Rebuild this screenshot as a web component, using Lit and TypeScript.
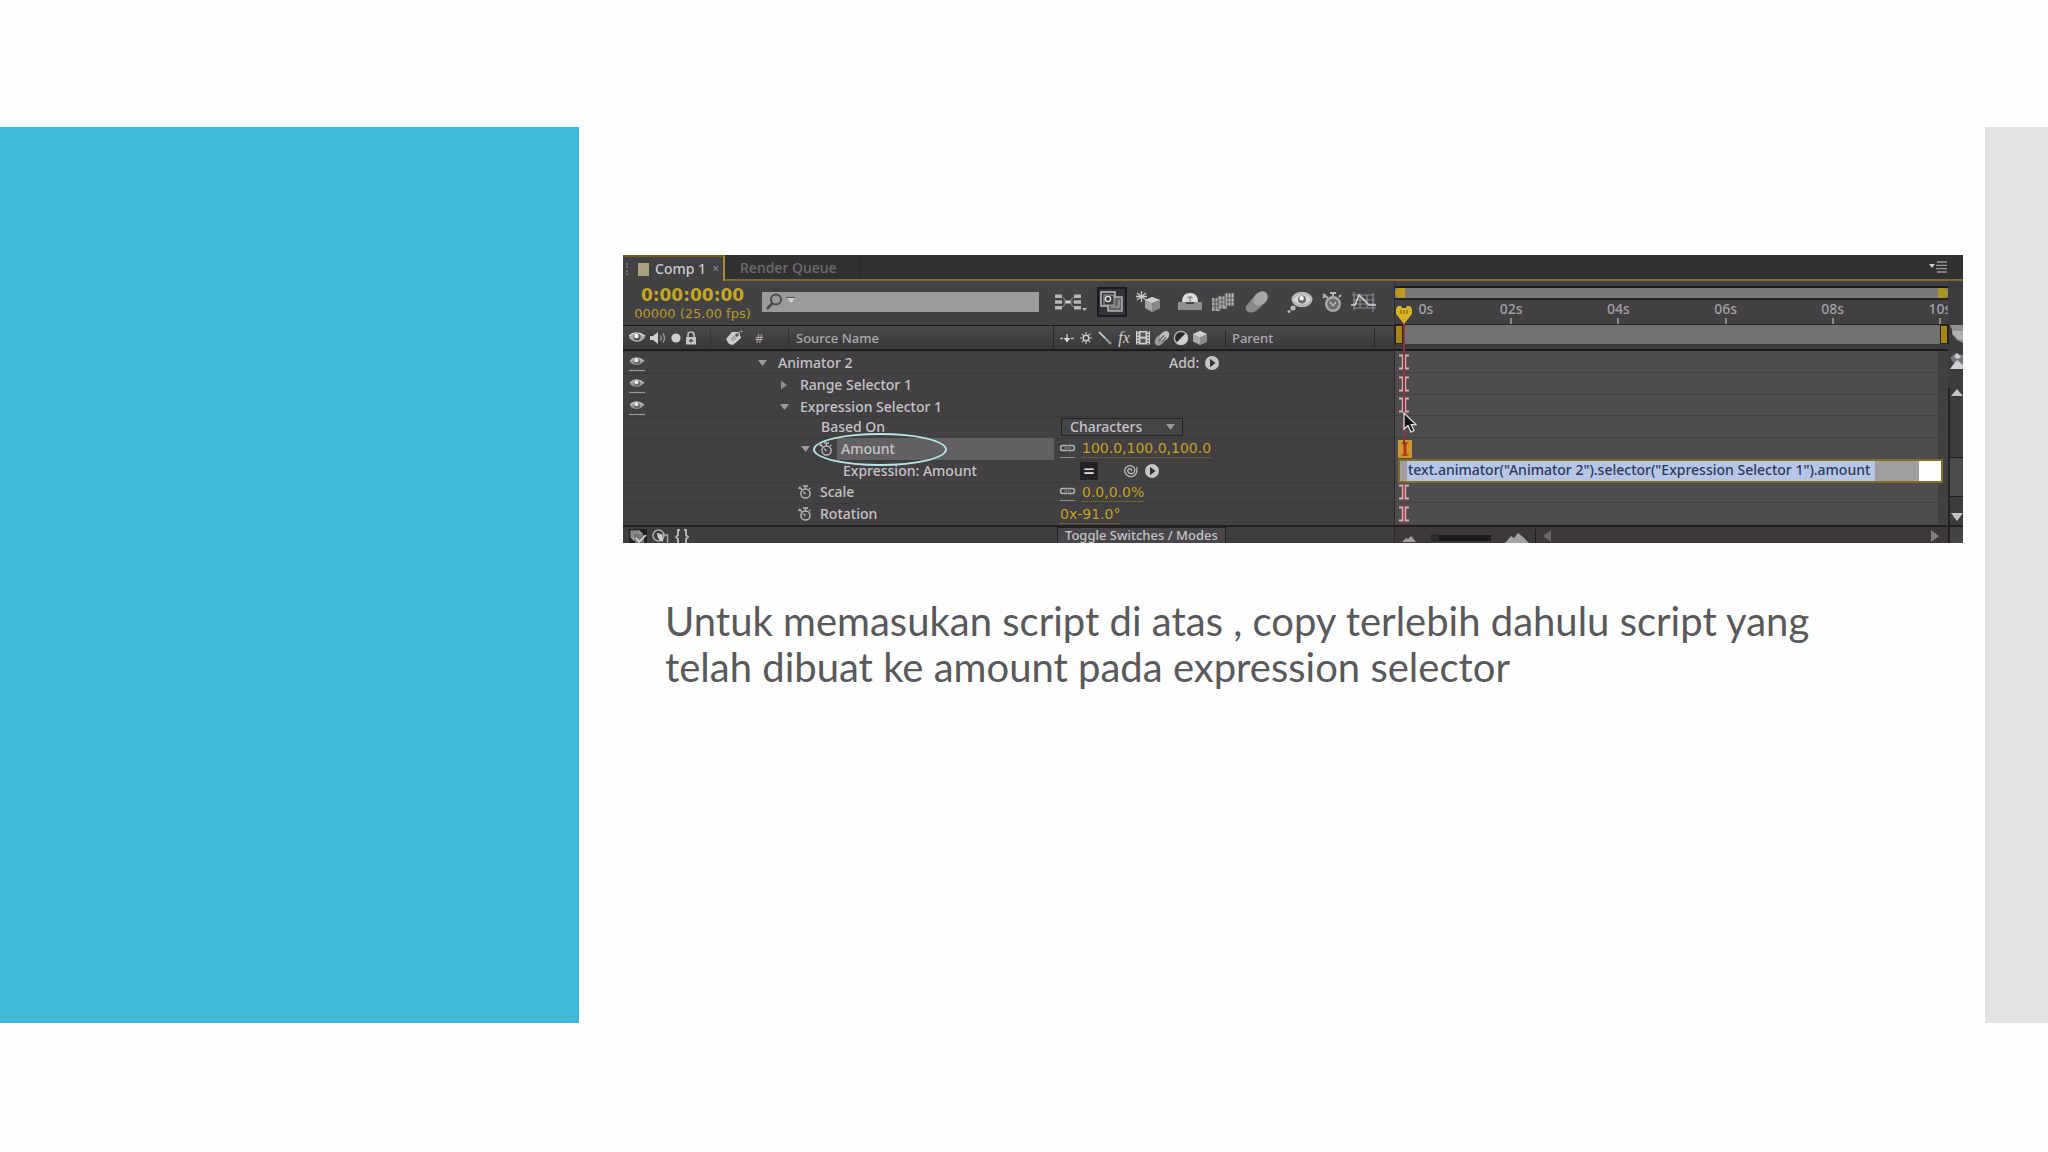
import { LitElement, html, css, svg, nothing, TemplateResult, SVGTemplateResult } from "lit";
import { customElement, property } from "lit/decorators.js";

type Shape = { w: number; h: number; body: SVGTemplateResult };

const shapes: Record<string, Shape> = {
  eye: { w: 18, h: 16, body: svg`<path d="M1 7Q8 -1 17 6L16 9Q9 15 2 9Z" fill="#a9a8aa"/><path d="M1 6Q8 0 17 6" fill="none" stroke="#d5d5d5" stroke-width="1.5"/><circle cx="9" cy="7" r="3.6" fill="#5a585b"/><circle cx="8.4" cy="6" r="2.2" fill="#fff"/>` },
  eyeRow: { w: 18, h: 18, body: svg`<path d="M2 8Q8 0 16 7Q10 14 3 9Z" fill="#9a999b"/><path d="M2 7Q8 1 16 7" fill="none" stroke="#bbb" stroke-width="1.3"/><circle cx="9" cy="7.6" r="3" fill="#6a686b"/><circle cx="8.4" cy="6.2" r="2" fill="#eee"/><path d="M1 16.5H17" stroke="#999" stroke-width="1.2"/>` },
  speaker: { w: 18, h: 16, body: svg`<path d="M1 6H4L9 2V14L4 10H1Z" fill="#cfcfcf"/><path d="M11.5 5.5Q13 8 11.5 10.5M14 3.5Q17 8 14 12.5" fill="none" stroke="#999" stroke-width="1.4"/>` },
  dot: { w: 12, h: 16, body: svg`<circle cx="6" cy="8" r="4.6" fill="#cfcfcf"/>` },
  lock: { w: 12, h: 16, body: svg`<path d="M3 8V4.5Q3 2 6 2T9 4.5V8" fill="none" stroke="#bbb" stroke-width="1.7"/><rect x="1" y="7" width="10" height="7.5" fill="#c4c4c4"/><path d="M4 10.8H8M6 9V12.5" stroke="#555" stroke-width="1.4"/>` },
  tag: { w: 20, h: 16, body: svg`<path d="M2 9L8 2L15 2L17 8L9 15L5 14Z" fill="#cdcdcd"/><circle cx="13" cy="5" r="1.7" fill="#444"/><path d="M7 9L11 6M8 11L12 8" stroke="#777"/><path d="M13 5Q16 0 19 2" fill="none" stroke="#888" stroke-width="1.2"/>` },
  shy: { w: 16, h: 16, body: svg`<path d="M1 8.5H4M12 8.5H15M8 4V12" stroke="#bbb" stroke-width="1.5"/><path d="M4.5 8H11.5L8 12Z" fill="#ddd"/>` },
  sun: { w: 16, h: 16, body: svg`<circle cx="8" cy="8" r="2.8" fill="none" stroke="#d0d0d0" stroke-width="1.5"/><path d="M8 2V4.5M8 11.5V14M2 8H4.5M11.5 8H14M3.8 3.8L5.5 5.5M10.5 10.5L12.2 12.2M12.2 3.8L10.5 5.5M5.5 10.5L3.8 12.2" stroke="#c0c0c0" stroke-width="1.2"/>` },
  slash: { w: 16, h: 16, body: svg`<path d="M2 2L9 9" stroke="#ddd" stroke-width="1.6"/><path d="M8 8L14 14" stroke="#999" stroke-width="2.4"/>` },
  film: { w: 16, h: 16, body: svg`<rect x="1" y="1" width="14" height="13.5" fill="#cfcfcf"/><path d="M3 1V15M13 1V15" stroke="#444" stroke-width="1.5" stroke-dasharray="1.6 1.4"/><rect x="5.5" y="2.5" width="5" height="4.2" fill="#555"/><rect x="5.5" y="8.6" width="5" height="4.2" fill="#555"/>` },
  links: { w: 16, h: 16, body: svg`<ellipse cx="6" cy="10" rx="6.4" ry="4.4" transform="rotate(-48 6 10)" fill="#999"/><ellipse cx="10.5" cy="6" rx="5.6" ry="4" transform="rotate(-48 10.5 6)" fill="#bdbdbd"/><path d="M5 11L10 5.5M8 12L12 7.5" stroke="#666" stroke-width="1.3"/>` },
  half: { w: 16, h: 16, body: svg`<circle cx="8" cy="8" r="6.6" fill="#2a292b" stroke="#b5b5b5" stroke-width="1.4"/><path d="M12.7 3.3A6.6 6.6 0 0 1 3.3 12.7Z" fill="#cfcfcf"/>` },
  cube: { w: 16, h: 16, body: svg`<path d="M8 1L15 4V11.5L8 15L1 11.5V4Z" fill="#a9a9a9"/><path d="M8 1L15 4L8 7.2L1 4Z" fill="#d0d0d0"/><path d="M8 7.2L15 4V11.5L8 15Z" fill="#8b8b8b"/>` },
  down: { w: 16, h: 16, body: svg`<path d="M4 5H13L8.5 11Z" fill="#9b999c"/>` },
  right: { w: 16, h: 16, body: svg`<path d="M5 3.5V12.5L11 8Z" fill="#8f8d90"/>` },
  watch: { w: 16, h: 16, body: svg`<circle cx="8.5" cy="9.5" r="4.6" fill="none" stroke="#b5b3b6" stroke-width="1.5"/><path d="M8.5 10L6.3 7.6M8.5 5V2.6M6 2H11M2 3L5 5.8M1.5 5L3.5 3M12 5L13.5 4" stroke="#b5b3b6" stroke-width="1.4"/>` },
  chain: { w: 17, h: 20, body: svg`<path d="M7.5 7.5V6.5H3.5Q1.5 6.5 1.5 9T3.5 11.5H7.5V10.5M9.5 7.5V6.5H13.5Q15.5 6.5 15.5 9T13.5 11.5H9.5V10.5" fill="none" stroke="#b3b1b4" stroke-width="1.5"/><path d="M5 9H12" stroke="#7b797c" stroke-width="1.2"/><path d="M1 18.5H16" stroke="#8f8d90"/>` },
  play: { w: 16, h: 16, body: svg`<circle cx="8" cy="8" r="7" fill="#c6c4c7"/><path d="M6 3.8L11.5 8L6 12.2Z" fill="#333134"/>` },
  whip: { w: 16, h: 16, body: svg`<path d="M8 8Q9.5 6 7 5.6Q4.5 5.8 4.8 8.6Q6 11.4 9.4 10.6Q12.6 9 11.4 5.2Q9.5 2 5.5 2.8Q1 4.6 1.8 9Q4 14.4 9.5 13.4Q14.6 12 14 4" fill="none" stroke="#bbb9bc" stroke-width="1.3"/>` },
  flow: { w: 34, h: 18, body: svg`<path d="M1 3.2H8M1 9H8M1 14.8H8M20 3.2H27M20 9H27M20 14.8H27" stroke="#b5b4b6" stroke-width="3.6"/><path d="M9 9H20M9 4L12 9L9 14M19 4L16 9L19 14" fill="none" stroke="#807f82" stroke-width="1.2"/><path d="M11.5 9H16.5" stroke="#cfcfcf" stroke-width="3"/><path d="M28 15H33L30.5 18Z" fill="#bbb"/>` },
  draft: { w: 24, h: 22, body: svg`<rect x="1" y="1" width="14" height="14" fill="none" stroke="#ccc" stroke-width="1.4"/><rect x="8" y="6" width="14" height="14" fill="#68666a" stroke="#bbb" stroke-width="1.4"/><rect x="4" y="4" width="10" height="10" fill="#3a383b" stroke="#aaa"/><circle cx="8" cy="8" r="2.6" fill="none" stroke="#ddd" stroke-width="1.4"/><path d="M11 16H19V9" fill="none" stroke="#aaa"/>` },
  starCube: { w: 24, h: 22, body: svg`<path d="M5.5 0V11M1 2L10 9M10 2L1 9M0 5.5H11" stroke="#c9c9c9" stroke-width="1.3"/><path d="M16 6L24 9V17L16 21L9 17V9Z" fill="#a3a3a3"/><path d="M16 6L24 9L16 12L9 9Z" fill="#cecece"/><path d="M16 12L24 9V17L16 21Z" fill="#868588"/>` },
  shyBig: { w: 24, h: 18, body: svg`<path d="M4 9Q4 0 12 0T20 9Z" fill="#dcdcdc"/><path d="M12 3V10M9.5 5Q12 2.4 14.5 5" stroke="#8a888b" stroke-width="1.4" fill="none"/><path d="M0 9H7L9 11H15L17 9H24V17H0Z" fill="#918f92"/>` },
  frames: { w: 24, h: 20, body: svg`<path d="M1 6H9V19H1Z" fill="#a5a4a6"/><path d="M7 4H16V17H7Z" fill="#b1b0b2" stroke="#555"/><path d="M14 1H23V14H14Z" fill="#bbb" stroke="#555"/><path d="M4 6V19M11 4V17M17 1V14M20 1V14M1 10H9M1 14H9M8 8H15M8 12H15M15 6H23M15 10H23" stroke="#5f5d62" stroke-width="1.2"/>` },
  blur: { w: 24, h: 22, body: svg`<path d="M2 14L11 3Q17 -2 21 2T21 11L11 20Q5 23 2 20T2 14Z" fill="#8c8a8d"/><ellipse cx="15.5" cy="7.5" rx="8" ry="5.8" transform="rotate(-45 15.5 7.5)" fill="#a8a6a9"/>` },
  brain: { w: 26, h: 22, body: svg`<ellipse cx="15" cy="8.5" rx="10.5" ry="7.8" fill="#b9b8ba"/><path d="M6 9Q14 -1 24 8Q16 18 6 9Z" fill="#d8d8d8"/><circle cx="15" cy="8.5" r="4" fill="#6a686b"/><circle cx="14.6" cy="7.2" r="2.2" fill="#fff"/><circle cx="6" cy="17" r="2.6" fill="#b9b8ba"/><circle cx="2" cy="20.5" r="1.5" fill="#b9b8ba"/>` },
  timer: { w: 20, h: 22, body: svg`<circle cx="11" cy="13" r="6.8" fill="#6d6b6e" stroke="#a9a7aa" stroke-width="2.4"/><path d="M11 6V2M8 2H14M1 3L6 7M1 7L4 4M17 6L19 4" stroke="#b5b3b6" stroke-width="1.8"/><path d="M8 11L11 15L14 11" fill="none" stroke="#bbb" stroke-width="1.3"/>` },
  graph: { w: 26, h: 20, body: svg`<path d="M1 3H23M3 0V18M2 8H24M2 12H24M3 16H25M22 1V20M9 3V16M16 3V16" stroke="#8b898d" stroke-width="1.2"/><path d="M0 13H4L8 3L18 13H25" fill="none" stroke="#d2d2d2" stroke-width="1.7"/>` },
  zoomGlass: { w: 32, h: 18, body: svg`<circle cx="11" cy="6.5" r="5" fill="none" stroke="#4a484b" stroke-width="1.8"/><path d="M7.5 10L2 16" stroke="#4a484b" stroke-width="2.6"/><path d="M22 5H30L26 10Z" fill="#d5d5d5"/><path d="M21 4.5H30" stroke="#555" stroke-width="1.2"/>` },
  menu: { w: 18, h: 12, body: svg`<path d="M0 3H6L3 7Z" fill="#ccc"/><path d="M8 1H18M7 4.3H18M7 7.6H18M8 11H18" stroke="#999" stroke-width="1.3"/>` },
  keyframe: { w: 12, h: 18, body: svg`<path d="M1 2.5H11M1 15.5H11M6 2V16" fill="none" stroke="#d8b0b4" stroke-width="2"/><path d="M6 2V16" stroke="#d8b0b4" stroke-width="4.4"/><path d="M6 0V18" stroke="#a33c48" stroke-width="1.6"/>` },
  keyframeOn: { w: 14, h: 18, body: svg`<rect width="14" height="18" fill="#d0962a"/><path d="M3.5 3H10.5M3.5 15H10.5" stroke="#a8641c" stroke-width="2"/><path d="M7 2V16" stroke="#b8321c" stroke-width="3"/>` },
  playhead: { w: 18, h: 19, body: svg`<path d="M3 1H6L7 3H11L12 1H15L17 4V9L9 19L1 9V4Z" fill="#d8b423"/><path d="M6 5V9M9 5V9M12 5V9" stroke="#8b6e10" stroke-width="1.3"/>` },
  pointer: { w: 14, h: 22, body: svg`<path d="M1 1V17L5 13.5L8 20L11 18.5L8.2 12.6H13Z" fill="#151315" stroke="#dcdcdc" stroke-width="1.3"/>` },
  smallHills: { w: 14, h: 8, body: svg`<path d="M0 8L4 4L6 5L9 2L14 8Z" fill="#a09ea1"/>` },
  bigHills: { w: 24, h: 10, body: svg`<path d="M0 10L6 3L9 5L13 0L17 3L24 10Z" fill="#a4a2a5"/>` },
  stepLeft: { w: 8, h: 14, body: svg`<path d="M8 1V13L0 7Z" fill="#69676a"/>` },
  stepRight: { w: 8, h: 14, body: svg`<path d="M0 1V13L8 7Z" fill="#807e81"/>` },
  up: { w: 12, h: 8, body: svg`<path d="M0 8L6 1L12 8Z" fill="#c3c1c4"/>` },
  downBig: { w: 12, h: 8, body: svg`<path d="M0 0H12L6 8Z" fill="#c3c1c4"/>` },
  shield: { w: 14, h: 18, body: svg`<path d="M1 0H14V18L8 15L3 9V5Z" fill="#939094"/><path d="M4 6H14V15L9 14L4 9Z" fill="#b2b0b3"/>` },
  marker: { w: 14, h: 18, body: svg`<path d="M1 6L6 1L14 3V17H1L5 11Z" fill="#77757a"/><path d="M1 17L8 8L14 13V17ZM8 1L12 5L9 7L5 5Z" fill="#d2d0d3"/>` },
  layers: { w: 18, h: 16, body: svg`<rect width="18" height="16" fill="#242225"/><path d="M2 2H11V9H2ZM4 4H13V11H4Z" fill="#69676a" stroke="#aaa"/><path d="M6 6H15V14H6Z" fill="#777"/><path d="M7 9L10 13L17 6" fill="none" stroke="#ddd" stroke-width="1.6"/>` },
  circles: { w: 18, h: 16, body: svg`<circle cx="6.5" cy="6.5" r="5.5" fill="none" stroke="#aaa" stroke-width="1.5"/><path d="M5 4Q11 4 11 10V13Q5 11 5 4Z" fill="#ccc"/><path d="M10 6H15.5V15H9" fill="none" stroke="#aaa" stroke-width="1.4"/>` },
  braces: { w: 14, h: 16, body: svg`<path d="M5 1H3V6L1 8L3 10V15H6M9 1H11V6L13 8L11 10V15H8" fill="none" stroke="#b2b0b3" stroke-width="2"/>` },
};

const icon = (name: string, cls = "") => {
  const s = shapes[name];
  return html`<svg class="icon ${cls}" width=${s.w} height=${s.h} viewBox="0 0 ${s.w} ${s.h}" aria-hidden="true">${s.body}</svg>`;
};

const iconRules = css`
  .icon { display: block; flex: none; }
  button { font: inherit; color: inherit; background: none; border: 0; padding: 0; margin: 0; }
`;

interface Row {
  name: string;
  depth: number;
  eye?: boolean;
  twirl?: "down" | "right";
  watch?: boolean;
  selected?: boolean;
  side?: TemplateResult;
}

const rows: Row[] = [
  { name: "Animator 2", depth: 0, eye: true, twirl: "down", side: html`<span class="add">Add:</span><button aria-label="Add">${icon("play")}</button>` },
  { name: "Range Selector 1", depth: 1, eye: true, twirl: "right" },
  { name: "Expression Selector 1", depth: 1, eye: true, twirl: "down" },
  { name: "Based On", depth: 3, side: html`<select class="mode" aria-label="Based On"><option>Characters</option></select>${icon("down", "caret")}` },
  { name: "Amount", depth: 2, twirl: "down", watch: true, selected: true, side: html`${icon("chain")}<button class="value">100.0,100.0,100.0</button>` },
  { name: "Expression: Amount", depth: 4, side: html`<button class="equals" aria-label="Enable expression">=</button><button aria-label="Pick whip">${icon("whip")}</button><button aria-label="Expression language">${icon("play")}</button>` },
  { name: "Scale", depth: 2, watch: true, side: html`${icon("chain")}<button class="value">0.0,0.0%</button>` },
  { name: "Rotation", depth: 2, watch: true, side: html`<button class="value">0x-91.0°</button>` },
];

@customElement("layer-outline")
export class LayerOutline extends LitElement {
  static styles = [iconRules, css`
    :host { display: block; min-width: 0; color: #c5c3c6; font-size: 14px; line-height: 20px; }
    .tools { display: grid; grid-template-columns: 139px minmax(0, 277fr) minmax(0, 355fr); height: 44px; background: #424144; }
    .clock { display: flex; flex-direction: column; align-items: center; padding-top: 4px; color: #c6a721; white-space: nowrap; font-family: "DejaVu Sans", sans-serif; }
    .time { font-size: 17px; font-weight: 700; line-height: 20px; }
    .fps { font-size: 13px; line-height: 17px; color: #b89b28; }
    .search { display: flex; align-items: center; align-self: start; margin-top: 11px; height: 20px; background: #9c9a9c; padding-left: 3px; }
    .search input { flex: 1; min-width: 0; border: 0; background: none; outline: 0; }
    .buttons { display: flex; align-items: center; justify-content: space-between; padding: 0 17px 0 15px; height: 42px; }
    .pressed { display: flex; align-items: center; justify-content: center; width: 30px; height: 30px; background: #353337; outline: 2px solid #1c1a1f; outline-offset: -2px; }
    .head { display: grid; grid-template-columns: 431px minmax(0, 1fr); height: 26px; box-sizing: border-box; border-top: 1px solid #1d1b1e; border-bottom: 2px solid #1d1b1e; background: linear-gradient(#4b494c, #39373a); font-size: 13px; color: #aaa8ab; }
    .head div { display: flex; align-items: center; }
    .left { border-right: 1px solid #2a282b; }
    .av { gap: 3px; width: 82px; padding-left: 5px; border-right: 1px solid #333134; }
    .label { gap: 11px; width: 78px; padding-left: 13px; box-sizing: border-box; border-right: 1px solid #333134; }
    .source { padding-left: 7px; }
    .switches { gap: 3px; padding-left: 5px; width: 166px; border-right: 1px solid #2a282b; }
    .fx { width: 16px; font: italic 16px/16px "Liberation Serif", serif; color: #d0d0d0; text-align: center; }
    .parent { flex: 1; padding-left: 6px; margin-right: 19px; border-right: 1px solid #2a282b; }
    .rows { display: grid; grid-template-rows: repeat(8, minmax(0, 1fr)); height: 174px; background: #424043; }
    .row { display: grid; grid-template-columns: 131px 300px minmax(0, 1fr); box-shadow: inset 0 1px #3c3a3d; }
    .eye { padding: 3px 5px; }
    .name { position: relative; display: flex; align-items: center; white-space: nowrap; }
    .d1 { padding-left: 22px; }
    .d2 { padding-left: 43px; }
    .d3 { padding-left: 67px; }
    .d4 { padding-left: 89px; }
    .twirl { margin-right: 8px; }
    .twirl.tight { margin-right: 5px; }
    .watch { margin-right: 7px; }
    .selected { align-self: stretch; flex: 1; display: flex; align-items: center; margin-left: -4px; padding-left: 4px; background: #626063; }
    .ring { position: absolute; left: 59px; top: -5px; width: 134px; height: 33px; box-sizing: border-box; border: 2px solid #b4e4e6; border-radius: 50%; }
    .side { position: relative; display: flex; align-items: center; padding-left: 5px; white-space: nowrap; }
    .add { margin-left: 110px; margin-right: 5px; }
    .side .icon { margin-right: 5px; }
    .value { margin-left: 1px; font-family: "DejaVu Sans", sans-serif; color: #c0a321; border-bottom: 1px dotted #8c7820; line-height: 18px; }
    .mode { appearance: none; width: 122px; height: 18px; margin-left: 2px; padding: 0 8px; border: 1px solid #242225; background: #464447; color: #c5c3c6; font: inherit; line-height: 16px; border-radius: 0; }
    .side .caret { position: absolute; left: 108px; }
    .equals { width: 18px; height: 18px; margin: 0 25px 0 21px; background: #242225; color: #ddd; font-size: 20px; line-height: 16px; }
    .foot { display: grid; grid-template-columns: 434px minmax(0, 1fr); height: 18px; box-sizing: border-box; border-top: 2px solid #242225; background: #403d40; overflow: hidden; }
    .panes { display: flex; gap: 5px; padding: 2px 6px; }
    .toggle { justify-self: start; height: 16px; padding: 0 7px; border: 1px solid #242225; border-bottom: 0; background: #48464a; font-size: 13px; line-height: 15px; white-space: nowrap; }
  `];

  private row(r: Row) {
    return html`<div class="row">
      <div class="eye">${r.eye ? icon("eyeRow") : nothing}</div>
      <div class="name d${r.depth}">
        ${r.twirl ? html`<button class="twirl ${r.watch ? "tight" : ""}" aria-label="Toggle ${r.name}">${icon(r.twirl)}</button>` : nothing}
        ${r.watch ? icon("watch", "watch") : nothing}
        <span class=${r.selected ? "selected" : ""}>${r.name}</span>
        ${r.selected ? html`<span class="ring"></span>` : nothing}
      </div>
      <div class="side">${r.side ?? nothing}</div>
    </div>`;
  }

  render() {
    return html`
      <div class="tools">
        <div class="clock"><span class="time">0:00:00:00</span><span class="fps">00000 (25.00 fps)</span></div>
        <label class="search">${icon("zoomGlass")}<input type="text" aria-label="Search layers" /></label>
        <div class="buttons">
          <button aria-label="Mini flowchart">${icon("flow")}</button>
          <button class="pressed" aria-label="Live update">${icon("draft")}</button>
          <button aria-label="Draft 3D">${icon("starCube")}</button>
          <span></span>
          <button aria-label="Hide shy layers">${icon("shyBig")}</button>
          <button aria-label="Frame blending">${icon("frames")}</button>
          <button aria-label="Motion blur">${icon("blur")}</button>
          <span></span>
          <button aria-label="Brainstorm">${icon("brain")}</button>
          <button aria-label="Auto-keyframe">${icon("timer")}</button>
          <button aria-label="Graph editor">${icon("graph")}</button>
        </div>
      </div>
      <div class="head">
        <div class="left">
          <div class="av">${["eye", "speaker", "dot", "lock"].map((n) => icon(n))}</div>
          <div class="label">${icon("tag")}<span>#</span></div>
          <div class="source">Source Name</div>
        </div>
        <div>
          <div class="switches">${["shy", "sun", "slash"].map((n) => icon(n))}<span class="fx">fx</span>${["film", "links", "half", "cube"].map((n) => icon(n))}</div>
          <div class="parent">Parent</div>
        </div>
      </div>
      <div class="rows">${rows.map((r) => this.row(r))}</div>
      <div class="foot">
        <div class="panes">${["layers", "circles", "braces"].map((n) => icon(n))}</div>
        <button class="toggle">Toggle Switches / Modes</button>
      </div>`;
  }
}

@customElement("time-graph")
export class TimeGraph extends LitElement {
  @property() expression = 'text.animator("Animator 2").selector("Expression Selector 1").amount';

  static styles = [iconRules, css`
    :host { display: grid; grid-template-columns: minmax(0, 1fr) 15px; min-width: 0; font-size: 14px; }
    .track { position: relative; min-width: 0; border-left: 1px solid #2a282b; background: #424043; }
    .nav { display: flex; justify-content: space-between; height: 10px; margin-top: 5px; border-top: 2px solid #1d1b1e; border-bottom: 2px solid #242225; background: #7a787b; }
    .grip { width: 10px; background: #c09a1c; border-radius: 5px 0 0 5px; }
    .grip.end { border-radius: 0 5px 5px 0; background: #a89620; }
    .ruler { display: flex; justify-content: space-between; height: 25px; padding: 0 8px 0 9px; color: #a19fa2; line-height: 18px; overflow: hidden; }
    .mark { display: flex; flex-direction: column; align-items: center; width: 0; }
    .mark::after { content: ""; flex: none; width: 2px; height: 6px; background: #8b898c; }
    .mark:first-child { padding-left: 22px; margin-right: -22px; }
    .mark:first-child::after { background: none; }
    .area { display: flex; justify-content: space-between; height: 19px; background: #737174; box-shadow: 0 0 0 1px #242225; }
    .edge { width: 6px; background: #a8841c; border: 1px solid #2c2408; }
    .shelf { height: 7px; box-sizing: border-box; border-bottom: 2px solid #1d1b1e; background: #3c3a3d; }
    .lanes { display: grid; grid-template-rows: repeat(8, minmax(0, 1fr)); height: 174px; margin-right: 10px; background: #4e4c4f; }
    .lane { display: flex; align-items: center; padding-left: 3px; box-shadow: inset 0 -1px #434144; }
    .lane.edit { margin-right: -5px; }
    .lane.edit input { flex: 1; min-width: 0; height: 24px; box-sizing: border-box; margin: 0; border: 2px solid #7e6f26; padding: 0 8px 2px; outline: 0; border-radius: 0; font: inherit; color: #2b3a5c;
      background: linear-gradient(90deg, #a09ea1 7px, #b7c6e6 7px, #b7c6e6 475px, #a09ea1 475px, #a09ea1 calc(100% - 22px), #fff calc(100% - 22px)); }
    .needle { position: absolute; left: 8px; top: 38px; width: 2px; height: 126px; background: #8c3440; }
    .head { position: absolute; left: 0; top: 24px; }
    .cursor { position: absolute; left: 8px; top: 131px; }
    .foot { display: flex; align-items: center; height: 18px; box-sizing: border-box; border-top: 2px solid #242225; background: #3c383c; overflow: hidden; padding: 5px 9px 0 7px; }
    .foot input { appearance: none; width: 60px; height: 6px; margin: 0 14px 0 15px; background: #1c1a1d; }
    .foot input::-webkit-slider-thumb { appearance: none; width: 8px; height: 8px; border-radius: 50%; background: #2d2b2e; }
    .bar { flex: 1; display: flex; justify-content: space-between; margin: -3px 0 0 6px; padding-left: 7px; border-left: 1px solid #1d1b1e; }
    .scroll { display: flex; flex-direction: column; align-items: flex-end; background: #3e3b3f; overflow: hidden; }
    .top { height: 44px; }
    .markers { display: flex; flex-direction: column; gap: 9px; height: 63px; width: 14px; }
    .rail { flex: 1; display: flex; flex-direction: column; align-items: flex-end; align-self: stretch; border-left: 2px solid #242225; }
    .thumb { align-self: stretch; margin-top: 61px; height: 38px; border-top: 1px solid #1d1b1e; border-bottom: 1px solid #1d1b1e; background: #4e4b4f; }
    .rail .downBig { margin-top: 16px; }
    .corner { align-self: stretch; height: 18px; box-sizing: border-box; border-top: 2px solid #1d1b1e; border-left: 2px solid #242225; background: #464347; }
  `];

  render() {
    return html`
      <div class="track">
        <div class="nav"><span class="grip"></span><span class="grip end"></span></div>
        <div class="ruler">${["0s", "02s", "04s", "06s", "08s", "10s"].map((t) => html`<span class="mark">${t}</span>`)}</div>
        <div class="area"><span class="edge"></span><span class="edge"></span></div>
        <div class="shelf"></div>
        <span class="needle"></span>
        <div class="lanes">
          ${[0, 1, 2, 3, 4, 5, 6, 7].map((i) => i === 5
            ? html`<div class="lane edit"><input type="text" aria-label="Expression" .value=${this.expression} /></div>`
            : html`<div class="lane">${i === 3 ? nothing : icon(i === 4 ? "keyframeOn" : "keyframe")}</div>`)}
        </div>
        ${icon("playhead", "head")}
        ${icon("pointer", "cursor")}
        <div class="foot">
          ${icon("smallHills")}<input type="range" aria-label="Time zoom" min="0" max="100" value="0" />${icon("bigHills")}
          <div class="bar"><button aria-label="Scroll left">${icon("stepLeft")}</button><button aria-label="Scroll right">${icon("stepRight")}</button></div>
        </div>
      </div>
      <div class="scroll">
        <div class="top"></div>
        <div class="markers">${icon("shield")}${icon("marker")}</div>
        <div class="rail">
          <button aria-label="Scroll up">${icon("up")}</button>
          <div class="thumb"></div>
          <button class="downBig" aria-label="Scroll down">${icon("downBig")}</button>
        </div>
        <div class="corner"></div>
      </div>`;
  }
}

@customElement("timeline-panel")
export class TimelinePanel extends LitElement {
  static styles = [iconRules, css`
    :host { display: block; background: #323132; color: #c5c3c6; font-family: "Noto Sans", "Open Sans", sans-serif; font-weight: 500; overflow: hidden; }
    .tabs { display: flex; height: 26px; box-sizing: border-box; border-bottom: 2px solid #7c6a34; font-size: 14px; line-height: 24px; }
    .tab { display: flex; align-items: center; gap: 6px; white-space: nowrap; padding: 2px 22px 0 15px; color: #6d6b6e; border-right: 1px solid #2a282b; }
    .active { height: 26px; width: 102px; box-sizing: border-box; padding: 0 4px 0 3px; color: #cbc9cc; background: #424144; border-top: 2px solid #6b6020; border-right: 2px solid #a88c2c; }
    .grab { width: 4px; height: 12px; border-left: 2px dotted #6b696c; }
    .swatch { width: 13px; height: 13px; background: #aaa27c; }
    .close { color: #858386; font-size: 12px; }
    .options { margin-left: auto; padding-right: 16px; align-self: center; }
    .body { display: grid; grid-template-columns: minmax(0, 771fr) minmax(0, 569fr); }
  `];

  render() {
    return html`
      <div class="tabs">
        <button class="tab active"><span class="grab"></span><span class="swatch"></span>Comp 1<span class="close">×</span></button>
        <button class="tab">Render Queue</button>
        <button class="options" aria-label="Panel options">${icon("menu")}</button>
      </div>
      <div class="body"><layer-outline></layer-outline><time-graph></time-graph></div>`;
  }
}

@customElement("app-root")
export class AppRoot extends LitElement {
  static styles = css`
    :host { display: grid; grid-template-columns: minmax(0, 579fr) minmax(0, 1406fr) minmax(0, 63fr); min-height: 100vh; box-sizing: border-box; padding: 127px 0 129px; background: #fefefe; }
    .accent { background: #3fb9d5; }
    .edge { background: #e3e2e3; }
    .content { padding: 128px 22px 0 44px; }
    .caption { margin: 55px 0 0; padding: 0 100px 0 42px; font-family: Lato, "Open Sans", sans-serif; font-size: 40px; line-height: 46px; color: #59585b; }
  `;

  render() {
    return html`
      <aside class="accent"></aside>
      <main class="content">
        <timeline-panel></timeline-panel>
        <p class="caption">Untuk memasukan script di atas , copy terlebih dahulu script yang telah dibuat ke amount pada expression selector</p>
      </main>
      <aside class="edge"></aside>`;
  }
}
